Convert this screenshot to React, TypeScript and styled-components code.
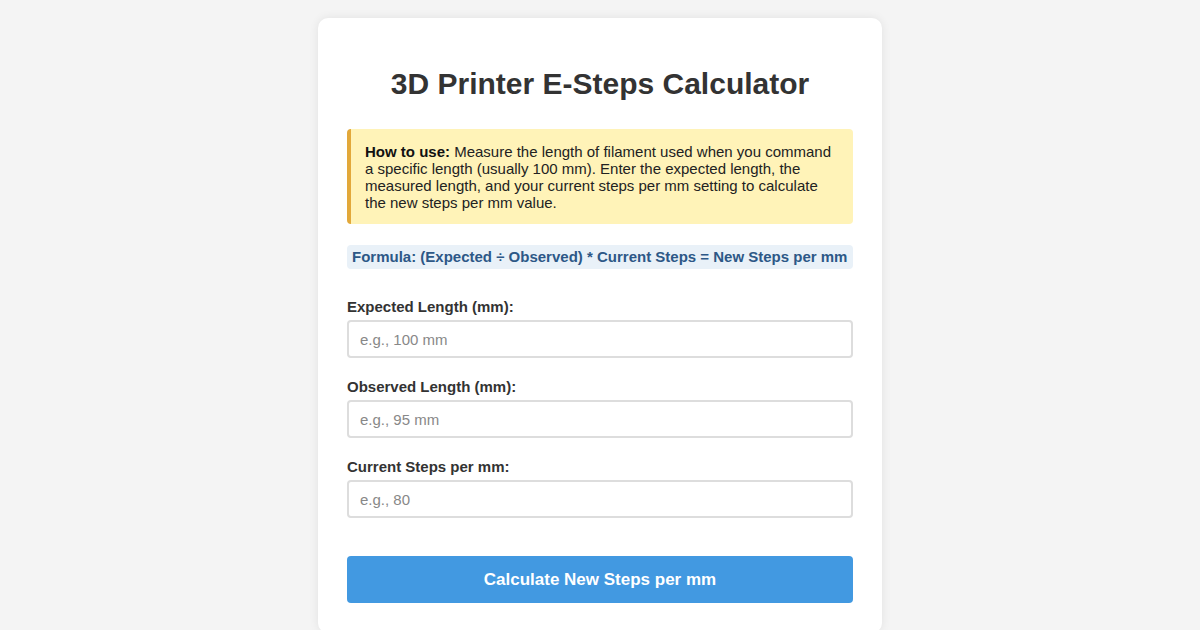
import React from "react";
import styled, {createGlobalStyle} from "styled-components";

const GlobalStyle = createGlobalStyle`
  body {
    margin: 0;
    background: #f4f4f4;
    font-family: "Liberation Sans", Arial, sans-serif;
    color: #333;
  }
`;

const Page = styled.div`
  display: flex;
  justify-content: center;
  padding-top: 18px;
`;

const Card = styled.div`
  width: 506px;
  padding: 30px 29px 30px;
  background: #fff;
  border-radius: 10px;
  box-shadow: 0 0 10px rgba(0, 0, 0, 0.08);
`;

const Title = styled.h1`
  font-size: 30px;
  font-weight: 700;
  text-align: center;
  color: #333;
  margin: 20px 0 29px;
  line-height: 32px;
`;

const Info = styled.div`
  background: #fff3b8;
  border-left: 4px solid #e2a83a;
  border-radius: 4px;
  padding: 14px 15px 13px 14px;
  font-size: 15px;
  line-height: 17px;
  color: #222;

  strong {
    color: #111;
  }
`;

const Formula = styled.div`
  margin-top: 21px;
  background: #e9f1f8;
  border-radius: 4px;
  padding: 4px 5px;
  font-size: 15px;
  line-height: 16px;
  font-weight: 700;
  color: #2d5887;
  white-space: nowrap;
`;

const Form = styled.div`
  margin-top: 29px;
  display: flex;
  flex-direction: column;
  gap: 20px;
`;

const Field = styled.div`
  display: flex;
  flex-direction: column;
`;

const Label = styled.label`
  font-size: 15px;
  font-weight: 700;
  line-height: 17px;
  color: #333;
  margin-bottom: 5px;
`;

const Input = styled.input`
  box-sizing: border-box;
  width: 100%;
  height: 38px;
  padding: 0 11px;
  border: 2px solid #ddd;
  border-radius: 4px;
  font-family: "Liberation Sans", Arial, sans-serif;
  font-size: 15px;
  color: #333;
  outline: none;

  &::placeholder {
    color: #888;
  }
`;

const Button = styled.button`
  margin-top: 38px;
  width: 100%;
  height: 47px;
  border: none;
  border-radius: 4px;
  background: #4299e1;
  color: #fff;
  font-family: "Liberation Sans", Arial, sans-serif;
  font-size: 17px;
  font-weight: 700;
  cursor: pointer;
`;

const fields = [
	{label: "Expected Length (mm):", placeholder: "e.g., 100 mm"},
	{label: "Observed Length (mm):", placeholder: "e.g., 95 mm"},
	{label: "Current Steps per mm:", placeholder: "e.g., 80"},
];

const App = () => (
	<>
		<GlobalStyle/>
		<Page>
			<Card>
				<Title>3D Printer E-Steps Calculator</Title>
				<Info>
					<strong>How to use:</strong> Measure the length of filament used when you command a specific length (usually 100 mm). Enter the expected length, the measured length, and your current steps per mm setting to calculate the new steps per mm value.
				</Info>
				<Formula>Formula: (Expected ÷ Observed) * Current Steps = New Steps per mm</Formula>
				<Form>
					{fields.map(f =>
						<Field key={f.label}>
							<Label>{f.label}</Label>
							<Input type="number" placeholder={f.placeholder}/>
						</Field>,
					)}
				</Form>
				<Button>Calculate New Steps per mm</Button>
			</Card>
		</Page>
	</>
);

export default App;
